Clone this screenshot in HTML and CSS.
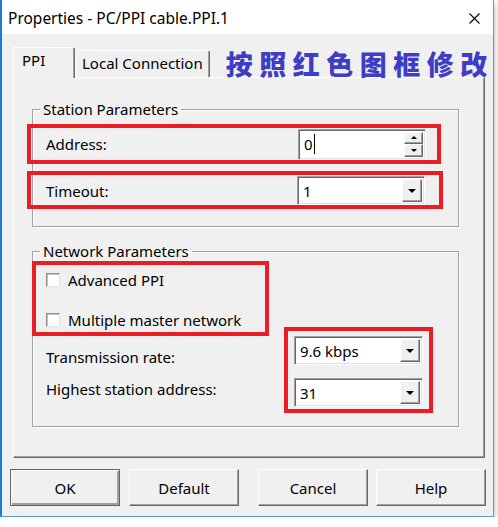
FILE: index.html
```html
<!DOCTYPE html>
<html lang="en">
<head>
  <meta charset="UTF-8" />
  <title>Properties - PC/PPI cable.PPI.1</title>
  <link rel="stylesheet" href="styles.css">
</head>
<body>
  <div class="window">
    <div class="titlebar">
      <span class="title">Properties - PC/PPI cable.PPI.1</span>
      <svg class="close" width="11" height="11" viewBox="0 0 11 11">
        <path d="M0.5 0.5 L10.5 10.5 M10.5 0.5 L0.5 10.5" stroke="#000" stroke-width="1.1" fill="none"/>
      </svg>
    </div>
    <div class="client">
      <div class="tabs">
        <div class="tab active">PPI</div>
        <div class="tab">Local Connection</div>
        <div class="note">按照红色图框修改</div>
      </div>
      <div class="panel">
        <fieldset class="group station">
          <legend>Station Parameters</legend>
          <div class="mark row-address">
            <span class="label">Address:</span>
            <div class="field spin">
              <span class="value">0<span class="caret"></span></span>
              <div class="spin-btns">
                <div class="btn3d"><span class="arrow-up"></span></div>
                <div class="btn3d"><span class="arrow-down small"></span></div>
              </div>
            </div>
          </div>
          <div class="mark row-timeout">
            <span class="label">Timeout:</span>
            <div class="field combo">
              <span class="value">1</span>
              <div class="btn3d drop"><span class="arrow-down"></span></div>
            </div>
          </div>
        </fieldset>
        <fieldset class="group network">
          <legend>Network Parameters</legend>
          <div class="mark checks">
            <label class="check"><span class="box"></span>Advanced PPI</label>
            <label class="check"><span class="box"></span>Multiple master network</label>
          </div>
          <div class="net-rows">
            <div class="net-labels">
              <span>Transmission rate:</span>
              <span>Highest station address:</span>
            </div>
            <div class="mark combos">
              <div class="field combo">
                <span class="value">9.6 kbps</span>
                <div class="btn3d drop"><span class="arrow-down"></span></div>
              </div>
              <div class="field combo">
                <span class="value">31</span>
                <div class="btn3d drop"><span class="arrow-down"></span></div>
              </div>
            </div>
          </div>
        </fieldset>
      </div>
      <div class="buttons">
        <button class="default">OK</button>
        <button class="b-default">Default</button>
        <button class="b-cancel">Cancel</button>
        <button class="b-help">Help</button>
      </div>
    </div>
  </div>
</body>
</html>
```

FILE: styles.css
```css
* {
  box-sizing: border-box;
}
body {
  margin: 0;
  background: #fff;
  font-family: "Noto Sans", "Liberation Sans", sans-serif;
  font-size: 15px;
  color: #000;
}
.window {
  width: 494px;
  height: 517px;
  border: 1px solid #5b9be0;
  border-left: 2px solid #1f7ad6;
  border-top: none;
  background: #f0f0f0;
  box-shadow: 0 3px 8px rgba(0,0,0,0.3);
  display: flex;
  flex-direction: column;
}
.titlebar {
  height: 34px;
  background: #fff;
  display: flex;
  align-items: center;
  justify-content: space-between;
  padding: 2px 13px 0 6px;
}
.title {
  font-size: 15.5px;
}
.client {
  padding: 13px 0 0 11px;
}

/* tabs */
.tabs {
  display: flex;
  align-items: flex-end;
  height: 30px;
}
.tab {
  flex: none;
  white-space: nowrap;
  height: 27px;
  line-height: 24px;
  padding: 0 6px;
  border: 1px solid #fff;
  border-right-color: #696969;
  border-bottom: none;
  box-shadow: inset -1px 0 #a0a0a0;
  border-radius: 2px 2px 0 0;
  background: #f0f0f0;
}
.tab.active {
  position: relative;
  z-index: 1;
  width: 62px;
  height: 31px;
  margin-bottom: -1px;
  padding-left: 8px;
  line-height: 24px;
}
.note {
  flex: none;
  margin-left: 16px;
  align-self: center;
  margin-top: 4px;
  font-family: "Noto Sans CJK SC", sans-serif;
  font-weight: 900;
  font-size: 27px;
  line-height: 30px;
  letter-spacing: 6.5px;
  color: #3d3dc6;
  white-space: nowrap;
}

/* tab page */
.panel {
  width: 472px;
  height: 381px;
  border: 1px solid #fff;
  border-right-color: #696969;
  border-bottom-color: #696969;
  box-shadow: inset -1px -1px #a0a0a0;
  padding: 22px 0 0 18px;
}
.group {
  margin: 0;
  width: 427px;
  padding: 0;
  border: 1px solid #a0a0a0;
  box-shadow: inset 1px 1px #fff, 1px 1px #fff;
}
.group legend {
  margin-left: 7px;
  padding: 0 3px;
  line-height: 18px;
}
.station {
  padding: 6px 0 17px;
}
.network {
  margin-top: 15px;
  padding: 1px 0 13px;
}

/* red annotation frames */
.mark {
  border: 4px solid #ec1c24;
}
.row-address, .row-timeout {
  display: flex;
  align-items: center;
  margin-left: -6px;
}
.row-address {
  width: 414px;
  height: 40px;
  padding: 0 11px 0 15px;
}
.row-timeout {
  width: 416px;
  height: 38px;
  margin-top: 7px;
  padding: 1px 14px 0 15px;
}
.label {
  flex: 1;
}

/* sunken fields */
.field {
  display: flex;
  background: #fff;
  border: 1px solid #a0a0a0;
  border-right-color: #fff;
  border-bottom-color: #fff;
  box-shadow: inset 1px 1px #696969, inset -1px -1px #e3e3e3;
  padding: 2px;
}
.field .value {
  flex: 1;
  padding-left: 3px;
  display: flex;
  align-items: center;
}
.spin {
  width: 128px;
  height: 31px;
}
.combo {
  width: 128px;
  height: 29px;
}
.caret {
  display: inline-block;
  width: 1px;
  height: 20px;
  margin-left: 1px;
  background: #000;
}
.btn3d {
  display: flex;
  align-items: center;
  justify-content: center;
  background: #f0f0f0;
  border: 1px solid #fff;
  border-right-color: #696969;
  border-bottom-color: #696969;
  box-shadow: inset -1px -1px #a0a0a0;
}
.spin-btns {
  width: 19px;
  display: flex;
  flex-direction: column;
}
.spin-btns .btn3d {
  flex: 1;
}
.drop {
  width: 20px;
}
.arrow-down {
  width: 0;
  height: 0;
  border-left: 4px solid transparent;
  border-right: 4px solid transparent;
  border-top: 4px solid #000;
}
.arrow-down.small {
  border-left-width: 3px;
  border-right-width: 3px;
  border-top-width: 3px;
}
.arrow-up {
  width: 0;
  height: 0;
  border-left: 3px solid transparent;
  border-right: 3px solid transparent;
  border-bottom: 3px solid #000;
}

/* network parameters */
.checks {
  width: 237px;
  height: 75px;
  margin-left: -1px;
  padding: 5px 0 2px 10px;
  display: flex;
  flex-direction: column;
  gap: 20px;
}
.check {
  display: flex;
  align-items: center;
  height: 20px;
}
.check .box {
  flex: none;
  width: 14px;
  height: 14px;
  margin-right: 8px;
  background: #fff;
  border: 1px solid #8e8e8e;
  border-right-color: #e6e6e6;
  border-bottom-color: #e6e6e6;
  box-shadow: inset 1px 1px #c4c4c4;
}
.net-rows {
  display: grid;
  grid-template-columns: 251px 149px;
  margin-top: -9px;
}
.net-labels {
  display: flex;
  flex-direction: column;
  gap: 12px;
  padding: 20px 0 0 13px;
  line-height: 20px;
}
.combos {
  height: 86px;
  padding: 5px 6px 2px 6px;
  display: flex;
  flex-direction: column;
  gap: 13px;
}
.combos .combo {
  width: 129px;
}

/* dialog buttons */
.buttons {
  display: flex;
  margin: 11px 0 0 -3px;
}
.buttons button {
  width: 110px;
  height: 37px;
  font-family: inherit;
  font-size: 15px;
  color: #000;
  background: #f0f0f0;
  border: 1px solid #fff;
  border-right-color: #696969;
  border-bottom-color: #696969;
  box-shadow: inset -1px -1px #a0a0a0;
  padding: 0;
}
.buttons button.default {
  border: 1px solid #646464;
  box-shadow: inset 1px 1px #fff, inset -2px -2px #a0a0a0, inset -1px -1px #696969;
}
.b-default {
  margin-left: 9px;
}
.b-cancel {
  margin-left: 19px;
}
.b-help {
  margin-left: 8px;
}
```
